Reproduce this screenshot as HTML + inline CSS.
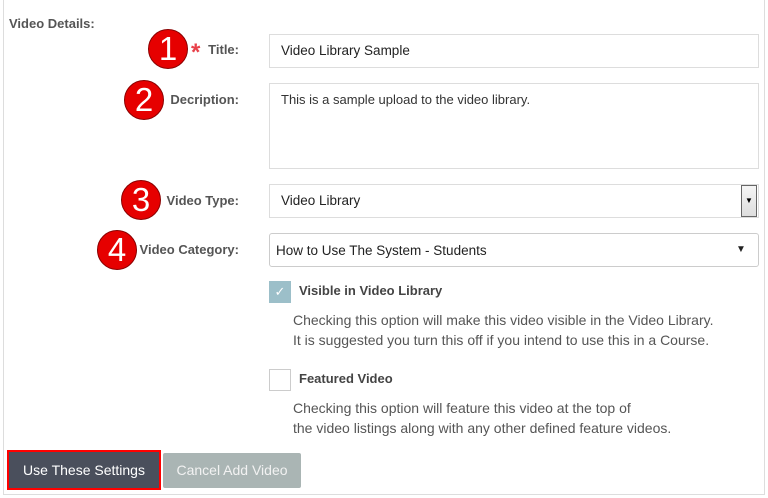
<!DOCTYPE html>
<html><head><meta charset="utf-8"><style>
*{box-sizing:border-box;margin:0;padding:0}
body{width:768px;height:498px;background:#fff;position:relative;overflow:hidden;font-family:"Liberation Sans",sans-serif;}
.a{position:absolute}
.frame{left:3px;top:-2px;width:762px;height:497px;border:1px solid #ddd;}
.lbl{font-weight:bold;font-size:13px;color:#555;text-align:right;}
.box{border:1px solid #ddd;background:#fff;font-size:13.5px;color:#222;padding-left:11px;}
.c{border-radius:50%;background:#e60000;border:1.5px solid #8a0000;color:#fff;font-size:33px;text-align:center;line-height:38px;width:40px;height:40px;}
.t{font-size:14px;color:#555;line-height:20px}
.cb{width:22px;height:22px;border:1px solid #ccc}
</style></head><body>
<div class="a frame"></div>
<div class="a lbl" style="left:9px;top:16px;text-align:left">Video Details:</div>

<div class="a c" style="left:148px;top:29px">1</div>
<div class="a" style="left:191px;top:42px;color:#e8414a;font-size:24px;font-weight:bold;line-height:22px">*</div>
<div class="a lbl" style="left:200px;top:42px;width:39px">Title:</div>
<div class="a box" style="left:269px;top:34px;width:490px;height:34px;line-height:31px">Video Library Sample</div>

<div class="a c" style="left:124px;top:80px">2</div>
<div class="a lbl" style="left:150px;top:92px;width:89px">Decription:</div>
<div class="a box" style="left:269px;top:83px;width:490px;height:86px;padding-top:8px;font-size:13px;color:#333">This is a sample upload to the video library.</div>

<div class="a c" style="left:121px;top:180px">3</div>
<div class="a lbl" style="left:150px;top:193px;width:89px">Video Type:</div>
<div class="a box" style="left:269px;top:184px;width:490px;height:34px;line-height:31px">Video Library</div>
<div class="a" style="left:741px;top:185px;width:16px;height:32px;border:1px solid #666;background:linear-gradient(#f5f5f5,#ddd);font-size:8px;text-align:center;line-height:30px">▼</div>

<div class="a c" style="left:97px;top:230px">4</div>
<div class="a lbl" style="left:130px;top:242px;width:109px">Video Category:</div>
<div class="a box" style="left:269px;top:233px;width:490px;height:34px;line-height:33px;border-radius:3px;padding-left:6px;border-color:#ccc">How to Use The System - Students</div>
<div class="a" style="left:736px;top:244px;font-size:10px;color:#222">▼</div>

<div class="a cb" style="left:269px;top:281px;background:#9cbfc9;border-color:#9cbfc9;color:#fff;font-size:13px;text-align:center;line-height:20px">✓</div>
<div class="a lbl" style="left:299px;top:283px;text-align:left;color:#444">Visible in Video Library</div>
<div class="a t" style="left:293px;top:310px">Checking this option will make this video visible in the Video Library.<br>It is suggested you turn this off if you intend to use this in a Course.</div>

<div class="a cb" style="left:269px;top:369px"></div>
<div class="a lbl" style="left:299px;top:371px;text-align:left;color:#444">Featured Video</div>
<div class="a t" style="left:293px;top:398px">Checking this option will feature this video at the top of<br>the video listings along with any other defined feature videos.</div>

<div class="a" style="left:7px;top:450px;width:154px;height:40px;border:2px solid #f00;background:#4a4f5c;color:#fff;font-size:14px;text-align:center;line-height:36px">Use These Settings</div>
<div class="a" style="left:163px;top:453px;width:138px;height:35px;background:#aab5b4;color:#f2f2f2;font-size:14px;text-align:center;line-height:34px;border-radius:2px">Cancel Add Video</div>
</body></html>
